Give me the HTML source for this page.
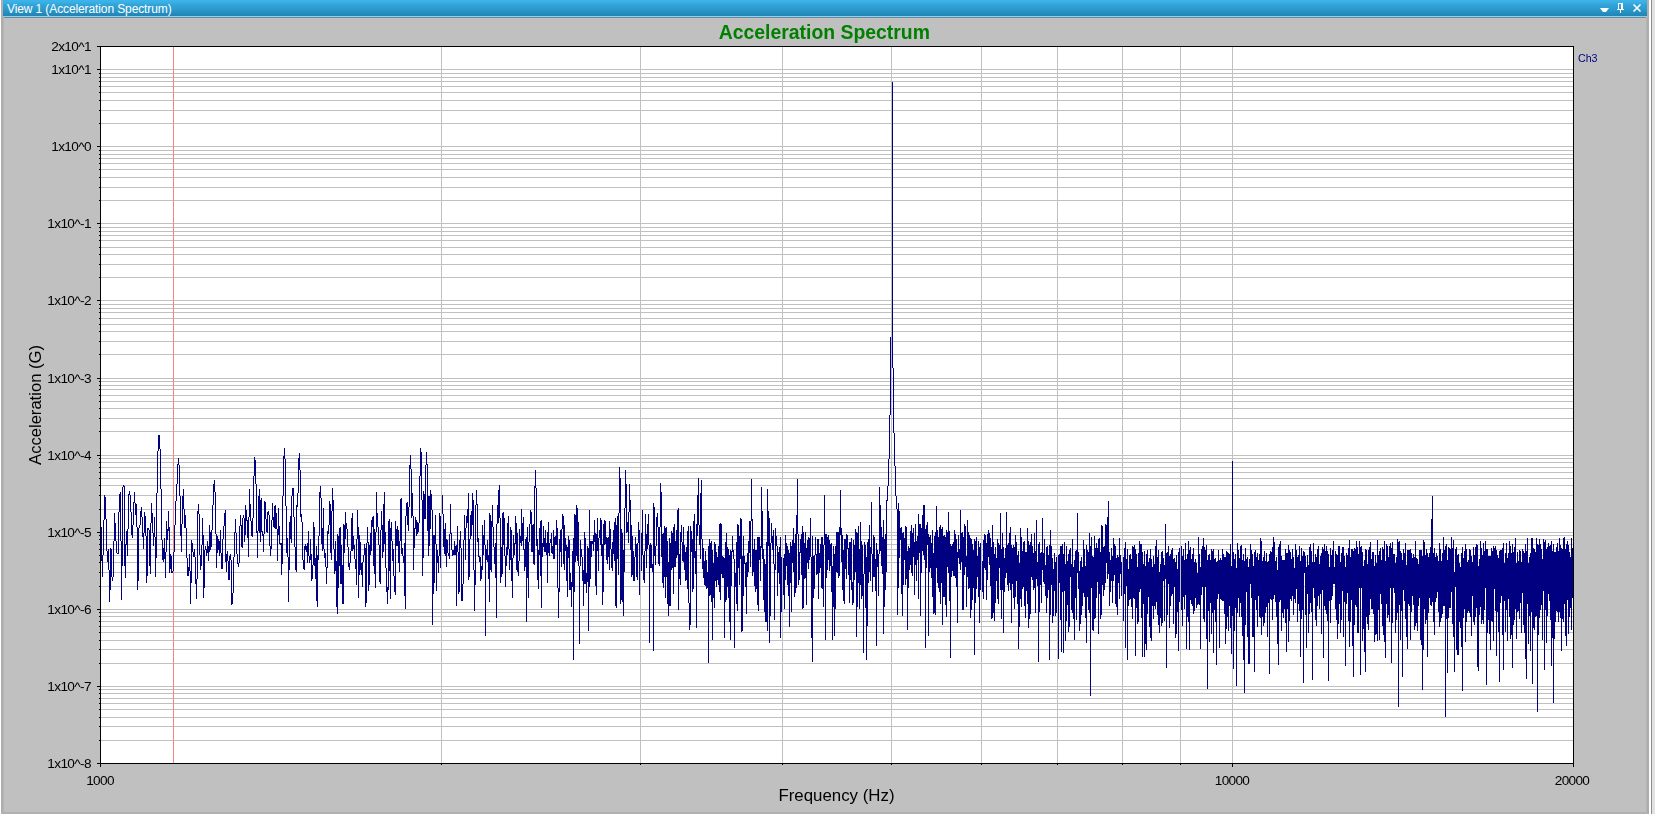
<!DOCTYPE html><html><head><meta charset="utf-8"><title>View 1 (Acceleration Spectrum)</title><style>
html,body{margin:0;padding:0;}body{width:1655px;height:814px;overflow:hidden;background:#c0c0c0;position:relative;font-family:"Liberation Sans",Arial,sans-serif;}
.a{position:absolute;}
#tb{left:3px;top:0;width:1644px;height:16px;background:linear-gradient(#3cb5ea 0%,#38aee4 18%,#32a3d8 30%,#2e9dd0 50%,#2891c2 75%,#1f84b6 100%);}
#tt{left:7px;top:1px;color:#fff;font-size:12px;line-height:16px;white-space:nowrap;letter-spacing:-0.11px;}
svg text{font-family:"Liberation Sans",Arial,sans-serif;}
</style></head><body>
<div class="a" style="left:0;top:0;width:1px;height:814px;background:#fff"></div>
<div class="a" style="left:1px;top:0;width:2px;height:814px;background:#aeaeae"></div>
<div class="a" style="left:3px;top:16px;width:1px;height:798px;background:#b4b4b4"></div>
<div class="a" style="left:1px;top:812px;width:1648px;height:2px;background:#b0b0b0"></div>
<div class="a" style="left:1646px;top:18px;width:1px;height:796px;background:#b4b4b4"></div>
<div class="a" style="left:1647px;top:0;width:2px;height:814px;background:#aeaeae"></div>
<div class="a" style="left:1649px;top:0;width:2px;height:814px;background:#fff"></div>
<div class="a" style="left:1651px;top:0;width:1px;height:814px;background:#8a8f8c"></div>
<div class="a" style="left:1652px;top:0;width:3px;height:814px;background:#e2e2e0"></div>
<div class="a" id="tb"></div>
<div class="a" style="left:3px;top:16px;width:1644px;height:1px;background:#c6beba"></div>
<div class="a" style="left:4px;top:17px;width:1642px;height:1px;background:#2f9bd0"></div>
<div class="a" style="left:4px;top:18px;width:1642px;height:1px;background:#c8c1bd"></div>
<div class="a" id="tt">View 1 (Acceleration Spectrum)</div>
<svg class="a" style="left:0;top:0;will-change:transform" width="1655" height="814" viewBox="0 0 1655 814">
<path d="M1600 8h9l-3 4h-3z" fill="#fff"/>
<path d="M1618.5 9.5V3.5H1622.5V9.5M1621.5 3.5V9.5M1617 9.5H1624M1620.5 10V13" stroke="#fff" stroke-width="1" fill="none" shape-rendering="crispEdges"/>
<path d="M1633.5 4.5L1640.5 11.5M1640.5 4.5L1633.5 11.5" stroke="#fff" stroke-width="1.6" fill="none"/>
<rect x="100" y="46" width="1473" height="717" fill="#fff"/>
<path d="M101 740.5H1573M101 726.5H1573M101 717.5H1573M101 709.5H1573M101 703.5H1573M101 698.5H1573M101 693.5H1573M101 689.5H1573M101 686.5H1573M101 663.5H1573M101 649.5H1573M101 640.5H1573M101 632.5H1573M101 626.5H1573M101 621.5H1573M101 616.5H1573M101 612.5H1573M101 609.5H1573M101 586.5H1573M101 572.5H1573M101 562.5H1573M101 555.5H1573M101 549.5H1573M101 544.5H1573M101 539.5H1573M101 535.5H1573M101 532.5H1573M101 509.5H1573M101 495.5H1573M101 485.5H1573M101 478.5H1573M101 472.5H1573M101 467.5H1573M101 462.5H1573M101 458.5H1573M101 455.5H1573M101 431.5H1573M101 418.5H1573M101 408.5H1573M101 401.5H1573M101 395.5H1573M101 389.5H1573M101 385.5H1573M101 381.5H1573M101 378.5H1573M101 354.5H1573M101 341.5H1573M101 331.5H1573M101 324.5H1573M101 318.5H1573M101 312.5H1573M101 308.5H1573M101 304.5H1573M101 300.5H1573M101 277.5H1573M101 264.5H1573M101 254.5H1573M101 247.5H1573M101 240.5H1573M101 235.5H1573M101 231.5H1573M101 227.5H1573M101 223.5H1573M101 200.5H1573M101 187.5H1573M101 177.5H1573M101 169.5H1573M101 163.5H1573M101 158.5H1573M101 154.5H1573M101 150.5H1573M101 146.5H1573M101 123.5H1573M101 110.5H1573M101 100.5H1573M101 92.5H1573M101 86.5H1573M101 81.5H1573M101 77.5H1573M101 73.5H1573M101 69.5H1573" stroke="#c0c0c0" stroke-width="1" fill="none" shape-rendering="crispEdges"/>
<path d="M1232.5 47V763" stroke="#c0c0c0" stroke-width="1" shape-rendering="crispEdges"/>
<path d="M173.5 47V763" stroke="#fd8383" stroke-width="1" shape-rendering="crispEdges"/>
<path d="M101.5 527V561M102.5 555V577M103.5 520V555M104.5 495V520M105.5 497V519M106.5 519V551M107.5 551V562M108.5 549V570M109.5 570V602M110.5 548V590M111.5 549V577M112.5 577V581M113.5 541V577M114.5 513V541M115.5 523V541M116.5 541V553M117.5 553V554M118.5 512V554M119.5 494V512M120.5 492V541M121.5 541V600M122.5 487V566M123.5 485V487M124.5 486V566M125.5 544V578M126.5 531V545M127.5 529V556M128.5 494V529M129.5 491V495M130.5 495V512M131.5 512V535M132.5 525V538M133.5 502V525M134.5 492V503M135.5 503V515M136.5 504V527M137.5 527V590M138.5 528V581M139.5 525V528M140.5 511V525M141.5 507V517M142.5 517V537M143.5 533V549M144.5 512V533M145.5 516V536M146.5 536V583M147.5 528V576M148.5 528V530M149.5 530V566M150.5 523V574M151.5 503V523M152.5 513V533M153.5 533V546M154.5 517V537M155.5 537V577M156.5 493V558M157.5 451V493M158.5 435V451M159.5 435V449M160.5 449V489M161.5 489V540M162.5 540V560M163.5 548V562M164.5 538V559M165.5 552V578M166.5 521V552M167.5 529V540M168.5 511V531M169.5 527V573M170.5 554V569M171.5 556V573M172.5 571V573M173.5 552V571M174.5 525V552M175.5 501V525M176.5 484V501M177.5 464V484M178.5 458V465M179.5 465V496M180.5 496V536M181.5 524V552M182.5 496V524M183.5 489V509M184.5 509V528M185.5 515V528M186.5 528V558M187.5 558V576M188.5 567V576M189.5 554V571M190.5 571V604M191.5 540V583M192.5 543V552M193.5 552V557M194.5 549V557M195.5 557V584M196.5 579V599M197.5 511V579M198.5 504V514M199.5 514V555M200.5 555V570M201.5 545V566M202.5 518V545M203.5 535V598M204.5 550V588M205.5 546V550M206.5 549V556M207.5 541V553M208.5 546V561M209.5 525V552M210.5 532V550M211.5 530V547M212.5 505V530M213.5 484V505M214.5 480V492M215.5 492V534M216.5 534V568M217.5 536V553M218.5 539V550M219.5 541V556M220.5 530V553M221.5 553V569M222.5 539V569M223.5 526V539M224.5 513V526M225.5 510V562M226.5 554V572M227.5 551V561M228.5 561V580M229.5 556V580M230.5 554V560M231.5 560V605M232.5 593V604M233.5 557V593M234.5 532V557M235.5 519V533M236.5 533V554M237.5 554V564M238.5 563V567M239.5 526V563M240.5 515V526M241.5 525V547M242.5 518V548M243.5 515V518M244.5 518V542M245.5 505V535M246.5 510V521M247.5 520V538M248.5 517V557M249.5 489V517M250.5 504V521M251.5 521V536M252.5 518V537M253.5 476V518M254.5 457V476M255.5 460V484M256.5 484V533M257.5 531V558M258.5 496V531M259.5 489V533M260.5 500V542M261.5 498V532M262.5 531V536M263.5 534V552M264.5 501V534M265.5 502V519M266.5 519V532M267.5 512V533M268.5 511V515M269.5 515V546M270.5 546V556M271.5 520V549M272.5 503V520M273.5 517V527M274.5 506V528M275.5 505V529M276.5 513V529M277.5 529V561M278.5 508V535M279.5 526V544M280.5 543V545M281.5 543V575M282.5 496V564M283.5 456V496M284.5 448V459M285.5 459V506M286.5 506V553M287.5 538V557M288.5 557V602M289.5 522V570M290.5 516V539M291.5 496V543M292.5 488V496M293.5 488V517M294.5 517V547M295.5 547V570M296.5 505V572M297.5 493V507M298.5 458V493M299.5 453V470M300.5 470V517M301.5 514V522M302.5 522V560M303.5 560V569M304.5 546V570M305.5 544V550M306.5 546V552M307.5 543V563M308.5 531V556M309.5 556V563M310.5 539V560M311.5 554V581M312.5 565V579M313.5 522V565M314.5 527V566M315.5 558V579M316.5 546V601M317.5 555V607M318.5 536V560M319.5 492V536M320.5 486V498M321.5 498V544M322.5 528V551M323.5 508V549M324.5 549V558M325.5 553V567M326.5 567V584M327.5 531V568M328.5 525V534M329.5 501V525M330.5 504V553M331.5 511V560M332.5 488V511M333.5 500V549M334.5 549V574M335.5 541V571M336.5 561V607M337.5 534V614M338.5 536V588M339.5 528V566M340.5 527V584M341.5 545V584M342.5 565V604M343.5 524V604M344.5 525V553M345.5 512V539M346.5 523V529M347.5 529V547M348.5 547V567M349.5 563V570M350.5 551V563M351.5 518V551M352.5 513V551M353.5 536V549M354.5 545V559M355.5 559V569M356.5 539V585M357.5 510V539M358.5 527V598M359.5 535V575M360.5 542V570M361.5 563V575M362.5 562V587M363.5 555V562M364.5 544V555M365.5 548V607M366.5 543V603M367.5 527V543M368.5 542V591M369.5 545V585M370.5 533V555M371.5 520V551M372.5 517V527M373.5 516V566M374.5 529V574M375.5 532V588M376.5 492V532M377.5 513V527M378.5 527V545M379.5 545V582M380.5 530V584M381.5 511V530M382.5 525V558M383.5 504V552M384.5 492V544M385.5 532V568M386.5 568V592M387.5 587V604M388.5 521V590M389.5 519V571M390.5 528V599M391.5 522V541M392.5 541V561M393.5 549V576M394.5 576V592M395.5 521V595M396.5 529V546M397.5 526V546M398.5 530V563M399.5 541V572M400.5 499V541M401.5 498V554M402.5 548V556M403.5 556V563M404.5 543V596M405.5 516V609M406.5 503V516M407.5 502V525M408.5 507V531M409.5 465V507M410.5 455V469M411.5 469V518M412.5 493V516M413.5 516V570M414.5 528V548M415.5 517V529M416.5 520V536M417.5 522V534M418.5 523V532M419.5 476V523M420.5 448V476M421.5 452V500M422.5 500V576M423.5 491V558M424.5 494V519M425.5 465V519M426.5 452V465M427.5 464V531M428.5 496V556M429.5 496V546M430.5 490V529M431.5 494V510M432.5 510V625M433.5 535V594M434.5 535V583M435.5 515V544M436.5 544V591M437.5 550V563M438.5 556V573M439.5 513V556M440.5 516V568M441.5 511V585M442.5 495V514M443.5 514V547M444.5 529V554M445.5 523V556M446.5 539V567M447.5 540V553M448.5 553V556M449.5 534V559M450.5 504V534M451.5 533V550M452.5 550V556M453.5 550V555M454.5 541V555M455.5 546V555M456.5 545V606M457.5 526V552M458.5 552V594M459.5 540V592M460.5 531V548M461.5 548V601M462.5 584V601M463.5 540V584M464.5 515V540M465.5 528V560M466.5 516V528M467.5 509V523M468.5 493V580M469.5 539V577M470.5 515V539M471.5 511V536M472.5 493V525M473.5 500V570M474.5 570V611M475.5 505V585M476.5 490V505M477.5 504V542M478.5 538V557M479.5 556V562M480.5 557V581M481.5 566V579M482.5 525V570M483.5 535V555M484.5 520V545M485.5 545V636M486.5 549V560M487.5 540V562M488.5 555V579M489.5 513V602M490.5 515V570M491.5 521V572M492.5 505V527M493.5 527V547M494.5 547V564M495.5 543V578M496.5 524V618M497.5 505V524M498.5 490V523M499.5 485V518M500.5 518V583M501.5 547V577M502.5 513V574M503.5 512V545M504.5 518V556M505.5 556V587M506.5 547V566M507.5 523V555M508.5 516V549M509.5 549V570M510.5 527V560M511.5 530V581M512.5 558V598M513.5 535V558M514.5 543V555M515.5 516V544M516.5 523V570M517.5 533V572M518.5 561V576M519.5 529V561M520.5 536V543M521.5 509V546M522.5 523V541M523.5 517V550M524.5 549V571M525.5 539V567M526.5 537V622M527.5 527V578M528.5 542V598M529.5 524V542M530.5 510V524M531.5 512V552M532.5 525V552M533.5 524V564M534.5 486V565M535.5 470V488M536.5 488V546M537.5 539V580M538.5 550V589M539.5 528V555M540.5 521V576M541.5 520V608M542.5 543V557M543.5 526V547M544.5 538V552M545.5 530V552M546.5 543V555M547.5 532V583M548.5 522V553M549.5 543V556M550.5 539V543M551.5 533V553M552.5 546V554M553.5 530V559M554.5 537V559M555.5 536V545M556.5 520V545M557.5 528V588M558.5 588V618M559.5 539V592M560.5 530V552M561.5 529V567M562.5 514V529M563.5 516V564M564.5 525V570M565.5 538V551M566.5 545V581M567.5 547V597M568.5 536V558M569.5 540V590M570.5 573V590M571.5 582V607M572.5 551V587M573.5 538V660M574.5 514V592M575.5 515V562M576.5 505V556M577.5 508V561M578.5 522V566M579.5 566V644M580.5 540V566M581.5 549V557M582.5 557V581M583.5 570V606M584.5 532V584M585.5 538V584M586.5 573V593M587.5 546V582M588.5 548V631M589.5 510V587M590.5 541V579M591.5 541V557M592.5 541V544M593.5 535V551M594.5 520V542M595.5 533V586M596.5 534V595M597.5 518V551M598.5 538V571M599.5 530V538M600.5 518V545M601.5 520V556M602.5 544V605M603.5 524V592M604.5 520V545M605.5 521V544M606.5 537V560M607.5 538V564M608.5 537V557M609.5 521V570M610.5 529V549M611.5 549V568M612.5 542V571M613.5 530V554M614.5 522V561M615.5 518V606M616.5 525V608M617.5 516V559M618.5 513V575M619.5 467V513M620.5 478V604M621.5 529V600M622.5 533V602M623.5 550V616M624.5 508V572M625.5 470V508M626.5 484V533M627.5 522V532M628.5 512V543M629.5 484V512M630.5 500V550M631.5 525V577M632.5 536V575M633.5 551V581M634.5 557V581M635.5 537V557M636.5 544V577M637.5 543V580M638.5 522V543M639.5 530V595M640.5 537V570M641.5 533V571M642.5 510V555M643.5 555V580M644.5 551V583M645.5 514V551M646.5 534V568M647.5 524V549M648.5 514V545M649.5 545V643M650.5 543V568M651.5 545V568M652.5 564V572M653.5 503V651M654.5 507V556M655.5 546V565M656.5 517V546M657.5 513V527M658.5 527V564M659.5 527V566M660.5 483V527M661.5 492V557M662.5 534V583M663.5 533V588M664.5 526V577M665.5 528V598M666.5 527V577M667.5 541V604M668.5 562V616M669.5 538V606M670.5 543V606M671.5 531V570M672.5 533V568M673.5 527V594M674.5 524V567M675.5 541V567M676.5 530V558M677.5 510V555M678.5 508V610M679.5 554V579M680.5 532V585M681.5 525V542M682.5 542V561M683.5 527V562M684.5 545V570M685.5 552V581M686.5 547V580M687.5 531V589M688.5 526V603M689.5 603V630M690.5 526V625M691.5 531V552M692.5 539V592M693.5 521V589M694.5 514V558M695.5 551V574M696.5 524V628M697.5 495V536M698.5 478V525M699.5 525V545M700.5 493V559M701.5 480V539M702.5 539V569M703.5 548V578M704.5 561V585M705.5 551V586M706.5 560V589M707.5 572V588M708.5 546V663M709.5 539V596M710.5 543V595M711.5 541V602M712.5 550V640M713.5 563V598M714.5 542V608M715.5 544V581M716.5 552V587M717.5 557V580M718.5 546V585M719.5 524V592M720.5 523V600M721.5 524V574M722.5 556V578M723.5 557V578M724.5 558V638M725.5 542V602M726.5 533V600M727.5 547V587M728.5 549V598M729.5 555V622M730.5 550V640M731.5 551V586M732.5 536V552M733.5 550V559M734.5 559V648M735.5 573V587M736.5 542V604M737.5 524V611M738.5 525V568M739.5 536V585M740.5 518V559M741.5 519V632M742.5 556V631M743.5 536V596M744.5 556V564M745.5 563V587M746.5 562V614M747.5 553V577M748.5 541V572M749.5 521V553M750.5 521V567M751.5 479V521M752.5 519V576M753.5 549V572M754.5 539V586M755.5 550V592M756.5 550V589M757.5 537V605M758.5 537V611M759.5 537V560M760.5 546V581M761.5 487V548M762.5 511V559M763.5 549V600M764.5 559V612M765.5 564V622M766.5 542V622M767.5 489V631M768.5 511V546M769.5 518V643M770.5 543V616M771.5 523V543M772.5 536V550M773.5 530V564M774.5 564V620M775.5 528V570M776.5 536V546M777.5 546V596M778.5 552V573M779.5 547V584M780.5 537V638M781.5 557V612M782.5 561V643M783.5 558V595M784.5 554V609M785.5 535V580M786.5 543V566M787.5 546V585M788.5 550V596M789.5 553V627M790.5 542V583M791.5 546V612M792.5 540V563M793.5 528V572M794.5 543V597M795.5 534V593M796.5 515V588M797.5 479V534M798.5 534V585M799.5 552V580M800.5 539V553M801.5 534V575M802.5 526V609M803.5 532V608M804.5 543V579M805.5 532V578M806.5 548V605M807.5 540V563M808.5 537V569M809.5 538V560M810.5 518V557M811.5 557V638M812.5 536V662M813.5 556V598M814.5 555V589M815.5 537V555M816.5 554V575M817.5 539V574M818.5 539V599M819.5 553V573M820.5 544V568M821.5 537V588M822.5 537V589M823.5 545V607M824.5 495V545M825.5 534V640M826.5 534V578M827.5 537V570M828.5 535V560M829.5 540V571M830.5 544V566M831.5 543V592M832.5 566V640M833.5 546V607M834.5 554V636M835.5 546V609M836.5 532V572M837.5 532V573M838.5 532V578M839.5 527V576M840.5 490V535M841.5 528V562M842.5 535V590M843.5 550V601M844.5 539V604M845.5 539V569M846.5 534V579M847.5 535V549M848.5 548V575M849.5 542V603M850.5 542V580M851.5 538V590M852.5 582V605M853.5 540V603M854.5 545V580M855.5 529V572M856.5 532V637M857.5 533V607M858.5 526V583M859.5 549V609M860.5 522V585M861.5 541V599M862.5 545V596M863.5 574V653M864.5 542V574M865.5 545V608M866.5 557V660M867.5 542V626M868.5 539V583M869.5 525V572M870.5 547V581M871.5 502V554M872.5 554V592M873.5 535V577M874.5 537V577M875.5 559V591M876.5 543V646M877.5 550V567M878.5 554V596M879.5 487V554M880.5 505V551M881.5 527V566M882.5 537V574M883.5 520V634M884.5 539V607M885.5 534V590M886.5 500V572M887.5 486V501M888.5 459V486M889.5 415V459M890.5 337V415M892.5 82V368M893.5 368V433M894.5 433V466M895.5 466V496M896.5 496V509M897.5 509V615M898.5 503V588M899.5 511V558M900.5 528V540M901.5 527V594M902.5 533V616M903.5 532V585M904.5 538V560M905.5 526V585M906.5 527V579M907.5 551V630M908.5 546V588M909.5 548V570M910.5 531V565M911.5 525V573M912.5 533V576M913.5 528V557M914.5 542V595M915.5 524V565M916.5 541V581M917.5 536V560M918.5 514V599M919.5 524V553M920.5 524V616M921.5 528V573M922.5 515V551M923.5 505V555M924.5 505V560M925.5 529V648M926.5 525V568M927.5 522V545M928.5 534V636M929.5 537V572M930.5 535V568M931.5 543V578M932.5 530V597M933.5 553V614M934.5 536V613M935.5 532V615M936.5 506V568M937.5 530V583M938.5 537V588M939.5 527V592M940.5 525V604M941.5 529V583M942.5 527V625M943.5 536V597M944.5 535V597M945.5 537V605M946.5 530V617M947.5 532V567M948.5 512V573M949.5 531V601M950.5 544V658M951.5 546V577M952.5 544V571M953.5 542V576M954.5 530V576M955.5 534V578M956.5 539V587M957.5 552V623M958.5 535V558M959.5 549V564M960.5 510V570M961.5 533V562M962.5 532V610M963.5 537V610M964.5 524V575M965.5 526V567M966.5 556V607M967.5 520V577M968.5 532V589M969.5 535V588M970.5 538V618M971.5 539V610M972.5 544V600M973.5 550V588M974.5 539V655M975.5 541V603M976.5 537V589M977.5 556V577M978.5 541V597M979.5 547V623M980.5 543V590M981.5 531V597M982.5 561V592M983.5 540V599M984.5 534V568M985.5 535V570M986.5 543V600M987.5 534V580M988.5 530V557M989.5 533V565M990.5 538V586M991.5 547V619M992.5 525V618M993.5 542V613M994.5 554V621M995.5 547V603M996.5 558V581M997.5 539V599M998.5 543V604M999.5 545V568M1000.5 513V590M1001.5 549V619M1002.5 533V590M1003.5 547V633M1004.5 558V592M1005.5 548V578M1006.5 512V573M1007.5 545V585M1008.5 543V591M1009.5 533V583M1010.5 527V590M1011.5 545V623M1012.5 548V584M1013.5 545V598M1014.5 547V609M1015.5 535V597M1016.5 542V581M1017.5 555V604M1018.5 551V649M1019.5 563V627M1020.5 528V599M1021.5 537V607M1022.5 551V589M1023.5 542V587M1024.5 541V606M1025.5 552V618M1026.5 552V591M1027.5 528V604M1028.5 541V628M1029.5 545V619M1030.5 542V614M1031.5 534V577M1032.5 546V580M1033.5 553V590M1034.5 533V588M1035.5 551V613M1036.5 520V579M1037.5 562V586M1038.5 544V662M1039.5 542V612M1040.5 553V585M1041.5 552V603M1042.5 518V570M1043.5 553V582M1044.5 539V584M1045.5 565V596M1046.5 547V613M1047.5 546V598M1048.5 555V590M1049.5 545V660M1050.5 530V615M1051.5 546V585M1052.5 558V623M1053.5 569V616M1054.5 553V591M1055.5 562V616M1056.5 557V613M1057.5 548V611M1058.5 555V659M1059.5 554V583M1060.5 546V620M1061.5 546V652M1062.5 544V592M1063.5 554V653M1064.5 542V591M1065.5 564V641M1066.5 546V621M1067.5 561V605M1068.5 554V632M1069.5 550V627M1070.5 548V577M1071.5 564V610M1072.5 539V613M1073.5 567V619M1074.5 560V640M1075.5 551V598M1076.5 550V620M1077.5 513V573M1078.5 552V589M1079.5 571V631M1080.5 561V624M1081.5 557V615M1082.5 567V606M1083.5 540V593M1084.5 549V597M1085.5 566V618M1086.5 545V643M1087.5 550V597M1088.5 552V610M1089.5 533V613M1090.5 546V696M1091.5 537V588M1092.5 556V630M1093.5 557V631M1094.5 536V619M1095.5 548V618M1096.5 543V598M1097.5 548V582M1098.5 539V634M1099.5 538V594M1100.5 552V619M1101.5 525V615M1102.5 526V585M1103.5 547V596M1104.5 546V590M1105.5 524V583M1106.5 525V563M1107.5 517V579M1108.5 501V574M1109.5 552V606M1110.5 560V592M1111.5 548V581M1112.5 556V603M1113.5 538V581M1114.5 544V575M1115.5 546V604M1116.5 558V607M1117.5 555V615M1118.5 557V583M1119.5 538V599M1120.5 555V574M1121.5 562V596M1122.5 576V596M1123.5 557V621M1124.5 548V594M1125.5 542V648M1126.5 559V586M1127.5 549V660M1128.5 569V606M1129.5 555V600M1130.5 554V599M1131.5 559V607M1132.5 546V619M1133.5 547V598M1134.5 545V599M1135.5 549V656M1136.5 554V608M1137.5 567V624M1138.5 553V622M1139.5 541V592M1140.5 544V589M1141.5 544V618M1142.5 552V657M1143.5 564V604M1144.5 551V657M1145.5 566V644M1146.5 554V650M1147.5 550V614M1148.5 562V597M1149.5 558V627M1150.5 549V638M1151.5 559V641M1152.5 567V606M1153.5 556V619M1154.5 564V606M1155.5 546V609M1156.5 540V602M1157.5 557V615M1158.5 550V625M1159.5 572V633M1160.5 564V618M1161.5 552V626M1162.5 551V623M1163.5 558V581M1164.5 565V621M1165.5 524V579M1166.5 553V668M1167.5 552V615M1168.5 546V584M1169.5 556V628M1170.5 554V606M1171.5 550V596M1172.5 548V594M1173.5 559V624M1174.5 558V587M1175.5 562V638M1176.5 555V634M1177.5 569V612M1178.5 552V651M1179.5 548V602M1180.5 574V600M1181.5 546V610M1182.5 556V626M1183.5 549V597M1184.5 560V609M1185.5 543V595M1186.5 559V649M1187.5 554V617M1188.5 541V622M1189.5 550V650M1190.5 547V600M1191.5 559V604M1192.5 554V606M1193.5 548V614M1194.5 562V611M1195.5 559V598M1196.5 563V608M1197.5 573V605M1198.5 537V604M1199.5 554V605M1200.5 567V649M1201.5 549V595M1202.5 546V587M1203.5 538V619M1204.5 547V622M1205.5 550V587M1206.5 545V639M1207.5 560V689M1208.5 555V611M1209.5 554V642M1210.5 560V603M1211.5 549V634M1212.5 551V613M1213.5 549V653M1214.5 559V610M1215.5 558V622M1216.5 562V665M1217.5 561V599M1218.5 550V594M1219.5 560V648M1220.5 558V599M1221.5 560V600M1222.5 549V601M1223.5 554V601M1224.5 557V614M1225.5 557V644M1226.5 551V629M1227.5 552V617M1228.5 553V631M1229.5 554V606M1230.5 544V628M1231.5 566V654M1232.5 461V616M1233.5 552V669M1234.5 559V631M1235.5 554V608M1236.5 568V686M1237.5 543V613M1238.5 550V598M1239.5 558V617M1240.5 546V603M1241.5 545V617M1242.5 560V636M1243.5 554V660M1244.5 561V693M1245.5 548V625M1246.5 559V592M1247.5 557V637M1248.5 567V664M1249.5 559V664M1250.5 544V584M1251.5 550V598M1252.5 554V637M1253.5 566V637M1254.5 552V672M1255.5 550V600M1256.5 557V610M1257.5 553V627M1258.5 560V596M1259.5 554V617M1260.5 538V618M1261.5 541V635M1262.5 561V617M1263.5 557V626M1264.5 551V623M1265.5 561V613M1266.5 553V607M1267.5 562V637M1268.5 561V603M1269.5 554V674M1270.5 551V599M1271.5 552V600M1272.5 547V620M1273.5 537V599M1274.5 542V595M1275.5 561V602M1276.5 557V617M1277.5 570V644M1278.5 547V665M1279.5 544V602M1280.5 541V600M1281.5 556V631M1282.5 560V613M1283.5 560V618M1284.5 560V609M1285.5 549V623M1286.5 553V652M1287.5 553V609M1288.5 545V642M1289.5 550V621M1290.5 552V599M1291.5 559V601M1292.5 549V596M1293.5 557V615M1294.5 568V599M1295.5 544V603M1296.5 550V589M1297.5 557V622M1298.5 555V604M1299.5 546V611M1300.5 561V657M1301.5 548V619M1302.5 556V610M1303.5 551V683M1304.5 552V573M1305.5 556V615M1306.5 567V648M1307.5 555V594M1308.5 565V633M1309.5 547V614M1310.5 544V603M1311.5 551V612M1312.5 562V680M1313.5 543V588M1314.5 562V598M1315.5 554V620M1316.5 557V626M1317.5 549V606M1318.5 546V596M1319.5 564V609M1320.5 556V594M1321.5 553V634M1322.5 547V590M1323.5 549V658M1324.5 544V606M1325.5 551V610M1326.5 546V614M1327.5 551V621M1328.5 554V681M1329.5 567V601M1330.5 548V623M1331.5 555V600M1332.5 550V596M1333.5 541V584M1334.5 567V584M1335.5 551V609M1336.5 554V620M1337.5 555V639M1338.5 546V624M1339.5 546V604M1340.5 562V633M1341.5 553V620M1342.5 547V591M1343.5 547V637M1344.5 556V602M1345.5 567V666M1346.5 553V604M1347.5 555V593M1348.5 548V621M1349.5 540V647M1350.5 557V622M1351.5 549V600M1352.5 549V646M1353.5 551V677M1354.5 548V625M1355.5 549V605M1356.5 541V607M1357.5 547V633M1358.5 554V633M1359.5 541V588M1360.5 547V675M1361.5 546V588M1362.5 552V641M1363.5 566V629M1364.5 560V652M1365.5 549V672M1366.5 550V617M1367.5 564V624M1368.5 550V630M1369.5 547V615M1370.5 542V599M1371.5 559V609M1372.5 552V609M1373.5 552V614M1374.5 566V642M1375.5 555V635M1376.5 563V634M1377.5 540V641M1378.5 555V610M1379.5 551V640M1380.5 548V594M1381.5 560V604M1382.5 547V626M1383.5 549V635M1384.5 541V642M1385.5 561V658M1386.5 544V604M1387.5 546V618M1388.5 557V615M1389.5 546V622M1390.5 543V588M1391.5 548V663M1392.5 542V623M1393.5 554V588M1394.5 554V593M1395.5 563V633M1396.5 557V620M1397.5 539V613M1398.5 542V707M1399.5 541V605M1400.5 551V640M1401.5 553V611M1402.5 560V677M1403.5 549V590M1404.5 553V601M1405.5 543V619M1406.5 565V637M1407.5 550V649M1408.5 550V604M1409.5 550V606M1410.5 549V640M1411.5 553V612M1412.5 558V596M1413.5 554V605M1414.5 557V630M1415.5 541V626M1416.5 558V623M1417.5 559V631M1418.5 564V606M1419.5 550V598M1420.5 550V640M1421.5 550V645M1422.5 556V690M1423.5 540V650M1424.5 542V609M1425.5 555V624M1426.5 549V620M1427.5 553V657M1428.5 557V613M1429.5 553V598M1430.5 547V605M1431.5 519V606M1432.5 496V602M1433.5 553V622M1434.5 548V635M1435.5 557V602M1436.5 553V598M1437.5 556V592M1438.5 561V612M1439.5 543V627M1440.5 549V622M1441.5 561V618M1442.5 553V614M1443.5 537V606M1444.5 550V606M1445.5 546V717M1446.5 544V619M1447.5 560V673M1448.5 547V618M1449.5 548V608M1450.5 549V608M1451.5 537V592M1452.5 548V624M1453.5 540V637M1454.5 572V672M1455.5 549V587M1456.5 547V650M1457.5 555V655M1458.5 554V655M1459.5 563V622M1460.5 567V628M1461.5 553V647M1462.5 547V691M1463.5 558V618M1464.5 551V609M1465.5 544V642M1466.5 549V622M1467.5 562V613M1468.5 560V611M1469.5 549V613M1470.5 550V617M1471.5 556V636M1472.5 562V596M1473.5 547V622M1474.5 555V625M1475.5 547V617M1476.5 544V608M1477.5 545V667M1478.5 566V671M1479.5 559V615M1480.5 541V607M1481.5 548V624M1482.5 555V620M1483.5 543V624M1484.5 551V610M1485.5 541V588M1486.5 549V685M1487.5 549V633M1488.5 556V620M1489.5 556V634M1490.5 556V650M1491.5 548V621M1492.5 551V622M1493.5 546V641M1494.5 548V589M1495.5 546V611M1496.5 550V656M1497.5 555V612M1498.5 558V632M1499.5 551V682M1500.5 550V603M1501.5 550V596M1502.5 548V635M1503.5 543V670M1504.5 563V601M1505.5 553V632M1506.5 543V610M1507.5 558V641M1508.5 553V599M1509.5 541V617M1510.5 546V639M1511.5 553V635M1512.5 544V668M1513.5 552V625M1514.5 547V620M1515.5 538V609M1516.5 563V639M1517.5 552V612M1518.5 561V611M1519.5 550V619M1520.5 551V603M1521.5 562V633M1522.5 549V593M1523.5 551V625M1524.5 553V633M1525.5 544V659M1526.5 551V679M1527.5 538V604M1528.5 563V644M1529.5 557V616M1530.5 553V651M1531.5 538V612M1532.5 538V684M1533.5 548V628M1534.5 549V630M1535.5 552V617M1536.5 538V616M1537.5 544V712M1538.5 545V635M1539.5 539V618M1540.5 544V610M1541.5 549V605M1542.5 559V640M1543.5 539V591M1544.5 542V670M1545.5 540V610M1546.5 549V643M1547.5 547V616M1548.5 543V594M1549.5 546V601M1550.5 545V620M1551.5 541V666M1552.5 551V638M1553.5 544V703M1554.5 552V639M1555.5 552V622M1556.5 547V611M1557.5 543V612M1558.5 551V622M1559.5 538V612M1560.5 545V618M1561.5 548V651M1562.5 549V619M1563.5 538V622M1564.5 537V604M1565.5 549V636M1566.5 544V646M1567.5 541V600M1568.5 545V634M1569.5 552V617M1570.5 557V608M1571.5 538V630M1572.5 548V598" stroke="#000080" stroke-width="1" fill="none" shape-rendering="crispEdges"/>
<path d="M441.5 47V763M640.5 47V763M782.5 47V763M891.5 47V763M981.5 47V763M1057.5 47V763M1122.5 47V763M1180.5 47V763" stroke="#c0c0c0" stroke-width="1" fill="none" shape-rendering="crispEdges"/>
<path d="M100.5 46V764M1573.5 46V764M100 46.5H1574M100 763.5H1574M97 763.5H100M99 740.5H100M99 726.5H100M99 717.5H100M99 709.5H100M99 703.5H100M99 698.5H100M99 693.5H100M99 689.5H100M97 686.5H100M99 663.5H100M99 649.5H100M99 640.5H100M99 632.5H100M99 626.5H100M99 621.5H100M99 616.5H100M99 612.5H100M97 609.5H100M99 586.5H100M99 572.5H100M99 562.5H100M99 555.5H100M99 549.5H100M99 544.5H100M99 539.5H100M99 535.5H100M97 532.5H100M99 509.5H100M99 495.5H100M99 485.5H100M99 478.5H100M99 472.5H100M99 467.5H100M99 462.5H100M99 458.5H100M97 455.5H100M99 431.5H100M99 418.5H100M99 408.5H100M99 401.5H100M99 395.5H100M99 389.5H100M99 385.5H100M99 381.5H100M97 378.5H100M99 354.5H100M99 341.5H100M99 331.5H100M99 324.5H100M99 318.5H100M99 312.5H100M99 308.5H100M99 304.5H100M97 300.5H100M99 277.5H100M99 264.5H100M99 254.5H100M99 247.5H100M99 240.5H100M99 235.5H100M99 231.5H100M99 227.5H100M97 223.5H100M99 200.5H100M99 187.5H100M99 177.5H100M99 169.5H100M99 163.5H100M99 158.5H100M99 154.5H100M99 150.5H100M97 146.5H100M99 123.5H100M99 110.5H100M99 100.5H100M99 92.5H100M99 86.5H100M99 81.5H100M99 77.5H100M99 73.5H100M97 69.5H100M99 46.5H100M97 46.5H100M441.5 763V765M640.5 763V765M782.5 763V765M891.5 763V765M981.5 763V765M1057.5 763V765M1122.5 763V765M1180.5 763V765M1232.5 763V767M100.5 763V767M1573.5 763V767" stroke="#000" stroke-width="1" fill="none" shape-rendering="crispEdges"/>
<text x="91" y="768" font-size="13.6" letter-spacing="-0.6" text-anchor="end">1x10^-8</text>
<text x="91" y="691" font-size="13.6" letter-spacing="-0.6" text-anchor="end">1x10^-7</text>
<text x="91" y="614" font-size="13.6" letter-spacing="-0.6" text-anchor="end">1x10^-6</text>
<text x="91" y="537" font-size="13.6" letter-spacing="-0.6" text-anchor="end">1x10^-5</text>
<text x="91" y="460" font-size="13.6" letter-spacing="-0.6" text-anchor="end">1x10^-4</text>
<text x="91" y="383" font-size="13.6" letter-spacing="-0.6" text-anchor="end">1x10^-3</text>
<text x="91" y="305" font-size="13.6" letter-spacing="-0.6" text-anchor="end">1x10^-2</text>
<text x="91" y="228" font-size="13.6" letter-spacing="-0.6" text-anchor="end">1x10^-1</text>
<text x="91" y="151" font-size="13.6" letter-spacing="-0.6" text-anchor="end">1x10^0</text>
<text x="91" y="74" font-size="13.6" letter-spacing="-0.6" text-anchor="end">1x10^1</text>
<text x="91" y="51" font-size="13.6" letter-spacing="-0.6" text-anchor="end">2x10^1</text>
<text x="100.0" y="785" font-size="13.6" letter-spacing="-0.65" text-anchor="middle">1000</text>
<text x="1232.0" y="785" font-size="13.6" letter-spacing="-0.65" text-anchor="middle">10000</text>
<text x="1572.0" y="785" font-size="13.6" letter-spacing="-0.65" text-anchor="middle">20000</text>
<text x="1578" y="61.6" font-size="10.67" fill="#000080">Ch3</text>
<text x="824.3" y="38.8" font-size="19.4" font-weight="bold" fill="#008000" text-anchor="middle">Acceleration Spectrum</text>
<text x="836.5" y="800.8" font-size="16.85" text-anchor="middle">Frequency (Hz)</text>
<text transform="translate(41 405) rotate(-90)" font-size="16.6" text-anchor="middle">Acceleration (G)</text>
</svg></body></html>
